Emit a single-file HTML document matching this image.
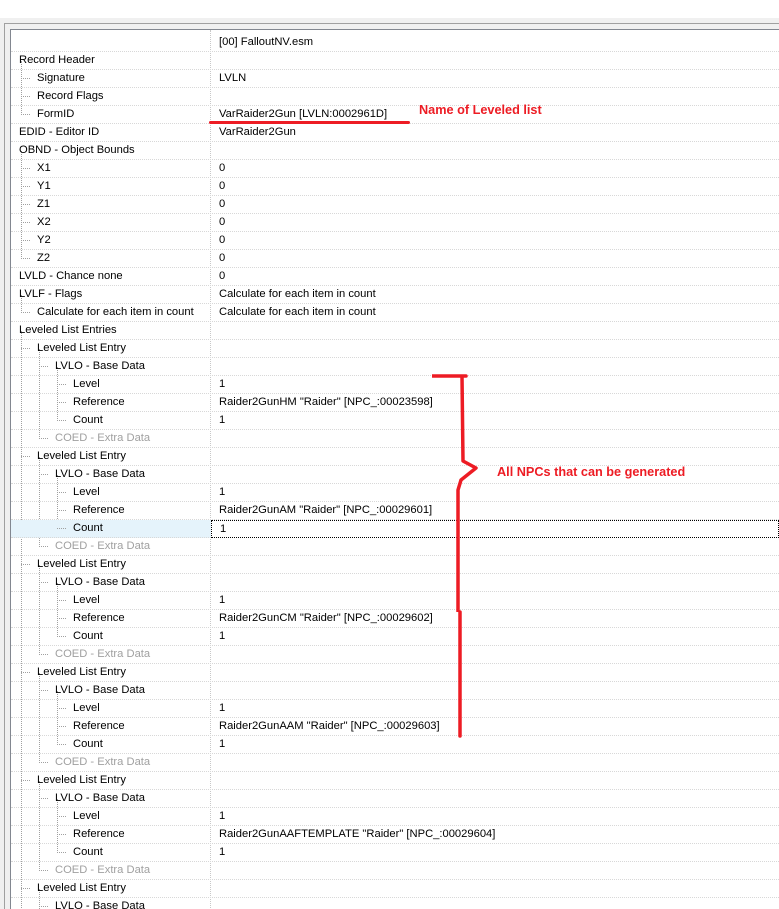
<!DOCTYPE html>
<html><head><meta charset="utf-8"><style>
*{margin:0;padding:0;box-sizing:border-box}
html,body{width:779px;height:909px;overflow:hidden;background:#fff;font-family:"Liberation Sans",sans-serif;font-size:11.2px;color:#000}
.band{position:absolute;left:0;top:18px;width:779px;height:891px;background:#f0f0f0}
.frame{position:absolute;left:4px;top:23px;width:775px;height:886px;border-left:1px solid #a0a0a0;border-top:1px solid #a0a0a0;background:#f0f0f0}
.inner{position:absolute;left:10px;top:29px;width:769px;height:880px;border-left:1px solid #828790;border-top:1px solid #828790;background:#fff;overflow:hidden}
.rows{position:absolute;left:0;top:4px;width:768px}
.r{position:relative;height:18px;border-bottom:1px dotted #d8d8d8;line-height:17px;white-space:nowrap}
.l{position:absolute;top:0}
.v{position:absolute;left:208px;top:0}
.l0{left:8px}.l1{left:26px}.l2{left:44px}.l3{left:62px}
.l1::before,.l2::before,.l3::before{content:"";position:absolute;left:-16px;top:8px;width:9px;border-top:1px dotted #a0a0a0}
.g{color:#a0a0a0}
.sel{background:#e5f3fb}
.sel .v{left:200px;width:568px;height:18px;border:1px dotted #000;padding-left:8px;background:#fff}
.div{position:absolute;left:199px;top:0;height:880px;border-left:1px dotted #c8c8c8}
.vl{position:absolute;border-left:1px dotted #a0a0a0;width:0}
.red{position:absolute;background:#ed1c24}
.rt{position:absolute;color:#ed1c24;font-weight:bold;font-size:12.7px}
</style></head><body>
<div class="band"></div>
<div class="frame"></div>
<div class="inner">
<div class="div"></div>
<div class="vl" style="left:10px;top:31px;height:54px"></div>
<div class="vl" style="left:10px;top:121px;height:108px"></div>
<div class="vl" style="left:10px;top:265px;height:18px"></div>
<div class="vl" style="left:10px;top:301px;height:581px"></div>
<div class="vl" style="left:28px;top:319px;height:90px"></div>
<div class="vl" style="left:46px;top:337px;height:54px"></div>
<div class="vl" style="left:28px;top:427px;height:90px"></div>
<div class="vl" style="left:46px;top:445px;height:54px"></div>
<div class="vl" style="left:28px;top:535px;height:90px"></div>
<div class="vl" style="left:46px;top:553px;height:54px"></div>
<div class="vl" style="left:28px;top:643px;height:90px"></div>
<div class="vl" style="left:46px;top:661px;height:54px"></div>
<div class="vl" style="left:28px;top:751px;height:90px"></div>
<div class="vl" style="left:46px;top:769px;height:54px"></div>
<div class="vl" style="left:28px;top:859px;height:30px"></div>
<div class="rows">
<div class="r"><span class="v">[00] FalloutNV.esm</span></div>
<div class="r"><span class="l l0">Record Header</span></div>
<div class="r"><span class="l l1">Signature</span><span class="v">LVLN</span></div>
<div class="r"><span class="l l1">Record Flags</span></div>
<div class="r"><span class="l l1">FormID</span><span class="v">VarRaider2Gun [LVLN:0002961D]</span></div>
<div class="r"><span class="l l0">EDID - Editor ID</span><span class="v">VarRaider2Gun</span></div>
<div class="r"><span class="l l0">OBND - Object Bounds</span></div>
<div class="r"><span class="l l1">X1</span><span class="v">0</span></div>
<div class="r"><span class="l l1">Y1</span><span class="v">0</span></div>
<div class="r"><span class="l l1">Z1</span><span class="v">0</span></div>
<div class="r"><span class="l l1">X2</span><span class="v">0</span></div>
<div class="r"><span class="l l1">Y2</span><span class="v">0</span></div>
<div class="r"><span class="l l1">Z2</span><span class="v">0</span></div>
<div class="r"><span class="l l0">LVLD - Chance none</span><span class="v">0</span></div>
<div class="r"><span class="l l0">LVLF - Flags</span><span class="v">Calculate for each item in count</span></div>
<div class="r"><span class="l l1">Calculate for each item in count</span><span class="v">Calculate for each item in count</span></div>
<div class="r"><span class="l l0">Leveled List Entries</span></div>
<div class="r"><span class="l l1">Leveled List Entry</span></div>
<div class="r"><span class="l l2">LVLO - Base Data</span></div>
<div class="r"><span class="l l3">Level</span><span class="v">1</span></div>
<div class="r"><span class="l l3">Reference</span><span class="v">Raider2GunHM "Raider" [NPC_:00023598]</span></div>
<div class="r"><span class="l l3">Count</span><span class="v">1</span></div>
<div class="r"><span class="l l2 g">COED - Extra Data</span></div>
<div class="r"><span class="l l1">Leveled List Entry</span></div>
<div class="r"><span class="l l2">LVLO - Base Data</span></div>
<div class="r"><span class="l l3">Level</span><span class="v">1</span></div>
<div class="r"><span class="l l3">Reference</span><span class="v">Raider2GunAM "Raider" [NPC_:00029601]</span></div>
<div class="r sel"><span class="l l3">Count</span><span class="v">1</span></div>
<div class="r"><span class="l l2 g">COED - Extra Data</span></div>
<div class="r"><span class="l l1">Leveled List Entry</span></div>
<div class="r"><span class="l l2">LVLO - Base Data</span></div>
<div class="r"><span class="l l3">Level</span><span class="v">1</span></div>
<div class="r"><span class="l l3">Reference</span><span class="v">Raider2GunCM "Raider" [NPC_:00029602]</span></div>
<div class="r"><span class="l l3">Count</span><span class="v">1</span></div>
<div class="r"><span class="l l2 g">COED - Extra Data</span></div>
<div class="r"><span class="l l1">Leveled List Entry</span></div>
<div class="r"><span class="l l2">LVLO - Base Data</span></div>
<div class="r"><span class="l l3">Level</span><span class="v">1</span></div>
<div class="r"><span class="l l3">Reference</span><span class="v">Raider2GunAAM "Raider" [NPC_:00029603]</span></div>
<div class="r"><span class="l l3">Count</span><span class="v">1</span></div>
<div class="r"><span class="l l2 g">COED - Extra Data</span></div>
<div class="r"><span class="l l1">Leveled List Entry</span></div>
<div class="r"><span class="l l2">LVLO - Base Data</span></div>
<div class="r"><span class="l l3">Level</span><span class="v">1</span></div>
<div class="r"><span class="l l3">Reference</span><span class="v">Raider2GunAAFTEMPLATE "Raider" [NPC_:00029604]</span></div>
<div class="r"><span class="l l3">Count</span><span class="v">1</span></div>
<div class="r"><span class="l l2 g">COED - Extra Data</span></div>
<div class="r"><span class="l l1">Leveled List Entry</span></div>
<div class="r"><span class="l l2">LVLO - Base Data</span></div>
</div>
</div>
<div class="red" style="left:209px;top:121px;width:201px;height:3px;border-radius:2px"></div>
<div class="rt" style="left:419px;top:103px">Name of Leveled list</div>
<svg style="position:absolute;left:0;top:0" width="779" height="909">
<polyline points="432,376 466,376 462,376 463,461 476,468 461,480 458,490 458,612" fill="none" stroke="#ed1c24" stroke-width="3.5" stroke-linejoin="round"/>
<line x1="460" y1="612" x2="460" y2="736" stroke="#ed1c24" stroke-width="3.5" stroke-linecap="round"/>
</svg>
<div class="rt" style="left:497px;top:465px">All NPCs that can be generated</div>
</body></html>
